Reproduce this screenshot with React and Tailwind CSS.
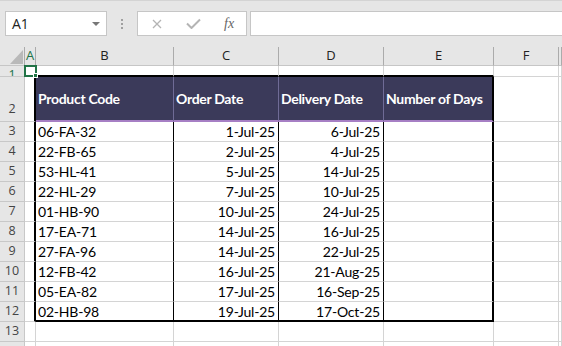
import React from 'react'

const rows = [
  ['06-FA-32', '1-Jul-25', '6-Jul-25'],
  ['22-FB-65', '2-Jul-25', '4-Jul-25'],
  ['53-HL-41', '5-Jul-25', '14-Jul-25'],
  ['22-HL-29', '7-Jul-25', '10-Jul-25'],
  ['01-HB-90', '10-Jul-25', '24-Jul-25'],
  ['17-EA-71', '14-Jul-25', '16-Jul-25'],
  ['27-FA-96', '14-Jul-25', '22-Jul-25'],
  ['12-FB-42', '16-Jul-25', '21-Aug-25'],
  ['05-EA-82', '17-Jul-25', '16-Sep-25'],
  ['02-HB-98', '19-Jul-25', '17-Oct-25'],
]

const cellFont = { fontFamily: 'Lato, "Open Sans", sans-serif' }
const uiFont = { fontFamily: '"Open Sans", "Noto Sans", sans-serif' }

function RowHead({ n, h, active }) {
  return (
    <div
      style={uiFont}
      className={`flex ${h} items-center justify-center overflow-hidden border-r border-b border-[#c8c8c8] bg-[#e6e6e6] text-[12.5px] ${
        active ? 'text-[#217346]' : 'text-[#444]'
      }`}
    >
      {n}
    </div>
  )
}

function Toolbar() {
  return (
    <div className="flex h-[47px] items-start border-t border-[#d4d4d4] bg-[#e6e6e6] pt-[10px]">
      <div
        style={uiFont}
        className="ml-[5px] flex h-[25px] w-[102px] items-center justify-between border border-[#c6c6c6] bg-white pl-[6px] pr-[6px] text-[14px] text-[#222]"
      >
        <span>A1</span>
        <span className="h-0 w-0 border-x-[4px] border-t-[4px] border-x-transparent border-t-[#777]" />
      </div>
      <div className="ml-[14px] mt-[8px] flex flex-col gap-[2px]">
        <span className="block h-[2px] w-[2px] bg-[#a0a0a0]" />
        <span className="block h-[2px] w-[2px] bg-[#a0a0a0]" />
        <span className="block h-[2px] w-[2px] bg-[#a0a0a0]" />
      </div>
      <div className="ml-[14px] flex h-[25px] w-[110px] items-center border border-[#c6c6c6] bg-white">
        <svg width="10" height="10" viewBox="0 0 10 10" className="ml-[14px]">
          <path d="M1 1 L9 9 M9 1 L1 9" stroke="#b4b4b4" strokeWidth="1.3" fill="none" />
        </svg>
        <svg width="15" height="11" viewBox="0 0 15 11" className="ml-[24px]">
          <path d="M1 5.5 L5.5 10 L14 1.5" stroke="#b4b4b4" strokeWidth="2" fill="none" />
        </svg>
        <span
          style={{ fontFamily: '"Liberation Serif", serif' }}
          className="ml-[23px] text-[14px] italic text-[#666]"
        >
          fx
        </span>
      </div>
      <div className="ml-[3px] h-[25px] flex-1 border border-r-0 border-[#c6c6c6] bg-white" />
    </div>
  )
}

export default function App() {
  const gridCols = 'grid grid-cols-[25px_11px_138px_105px_105px_110px_65px_1fr]'
  const colHead =
    'flex h-[19px] items-center justify-center border-r border-b border-r-[#ababab] border-b-[#c6c6c6] bg-[#e6e6e6] text-[13px] text-[#222]'
  const grid = 'border-r border-b border-[#d4d4d4]'
  const head =
    'flex h-[45px] items-center bg-[#3b3a5a] pl-[2px] text-[14px] font-bold tracking-[-0.3px] text-white'
  const data = 'flex h-[20px] items-center text-[14px] tracking-[-0.2px] text-black'

  return (
    <div className="relative h-[346px] w-[562px] overflow-hidden bg-white">
      <Toolbar />
      <div className={gridCols} style={uiFont}>
        {/* column headers */}
        <div className="relative h-[19px] border-r border-b border-r-[#ababab] border-b-[#c6c6c6] bg-[#e6e6e6]">
          <svg width="13" height="14" viewBox="0 0 13 14" className="absolute left-[10px] top-[3px]">
            <path d="M13 0 L13 14 L0 14 Z" fill="#b9b9b9" />
          </svg>
        </div>
        <div className={`${colHead} bg-[#dcdcdc] text-[#217346]`}>A</div>
        <div className={colHead}>B</div>
        <div className={colHead}>C</div>
        <div className={colHead}>D</div>
        <div className={colHead}>E</div>
        <div className={colHead}>F</div>
        <div className={colHead} />

        {/* row 1 */}
        <RowHead n="1" h="h-[11px] items-start" active />
        <div className={`h-[11px] ${grid}`} />
        <div className="h-[11px] border-r border-[#d4d4d4] border-b-2 border-b-black" />
        <div className="h-[11px] border-r border-[#d4d4d4] border-b-2 border-b-black" />
        <div className="h-[11px] border-r border-[#d4d4d4] border-b-2 border-b-black" />
        <div className="h-[11px] border-r border-[#d4d4d4] border-b-2 border-b-black" />
        <div className={`h-[11px] ${grid}`} />
        <div className={`h-[11px] ${grid}`} />

        {/* row 2 header */}
        <RowHead n="2" h="h-[45px] items-end pb-[2px]" />
        <div className="h-[45px] border-b border-r-2 border-b-[#d4d4d4] border-r-black" />
        {['Product Code', 'Order Date', 'Delivery Date'].map((t) => (
          <div
            key={t}
            style={cellFont}
            className={`${head} border-r border-b-2 border-r-[#6f6b96] border-b-[#a67fc4]`}
          >
            {t}
          </div>
        ))}
        <div style={cellFont} className={`${head} border-r-2 border-b-2 border-r-black border-b-[#a67fc4]`}>
          Number of Days
        </div>
        <div className={`h-[45px] ${grid}`} />
        <div className={`h-[45px] ${grid}`} />

        {/* data rows */}
        {rows.map((r, i) => {
          const last = i === rows.length - 1
          const bb = last ? 'border-b-2 border-b-black' : 'border-b border-b-[#d4d4d4]'
          return (
            <React.Fragment key={i}>
              <RowHead n={i + 3} h="h-[20px]" />
              <div className="h-[20px] border-b border-r-2 border-b-[#d4d4d4] border-r-black" />
              <div style={cellFont} className={`${data} border-r border-r-black ${bb} pl-[2px]`}>
                {r[0]}
              </div>
              <div style={cellFont} className={`${data} justify-end border-r border-r-black ${bb} pr-[3px]`}>
                {r[1]}
              </div>
              <div style={cellFont} className={`${data} justify-end border-r border-r-black ${bb} pr-[3px]`}>
                {r[2]}
              </div>
              <div className={`h-[20px] border-r-2 border-r-black ${bb}`} />
              <div className={`h-[20px] ${grid}`} />
              <div className={`h-[20px] ${grid}`} />
            </React.Fragment>
          )
        })}

        {/* rows 13, 14 */}
        {[13, 14].map((n) => (
          <React.Fragment key={n}>
            <RowHead n={n} h="h-[20px]" />
            <div className={`h-[20px] ${grid}`} />
            <div className={`h-[20px] ${grid}`} />
            <div className={`h-[20px] ${grid}`} />
            <div className={`h-[20px] ${grid}`} />
            <div className={`h-[20px] ${grid}`} />
            <div className={`h-[20px] ${grid}`} />
            <div className={`h-[20px] ${grid}`} />
          </React.Fragment>
        ))}
      </div>

      {/* active cell selection */}
      <div className="absolute left-[24px] top-[65px] h-[12px] w-[13px] border-2 border-[#217346]" />
      <div className="absolute left-[33px] top-[73px] h-[5px] w-[5px] border border-white bg-[#217346]" />
    </div>
  )
}
